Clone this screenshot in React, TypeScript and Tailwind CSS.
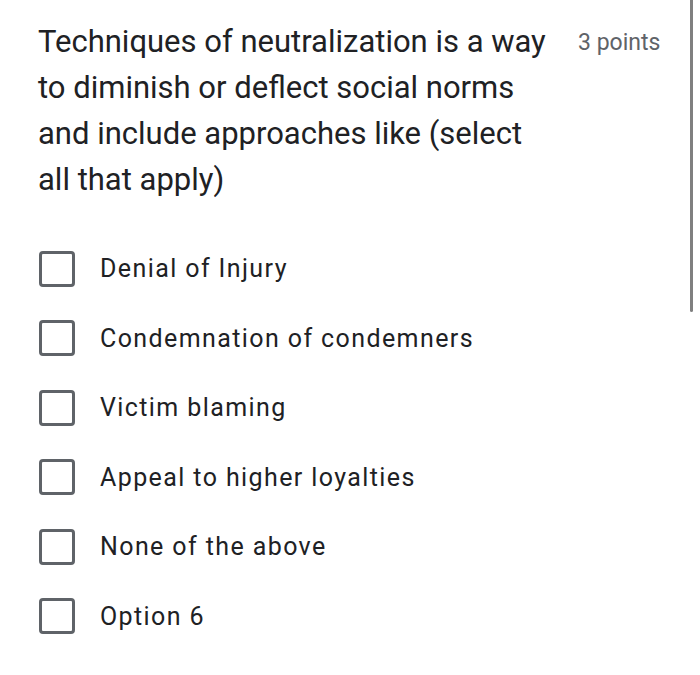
const OPTIONS = [
  'Denial of Injury',
  'Condemnation of condemners',
  'Victim blaming',
  'Appeal to higher loyalties',
  'None of the above',
  'Option 6',
]

export default function App() {
  return (
    <div className="relative w-[700px] h-[675px] bg-white overflow-hidden" style={{ fontFamily: 'Roboto, "Noto Sans", sans-serif' }}>
      {/* scrollbar */}
      <div className="absolute right-[7px] top-0 w-[3px] h-[312px] bg-[#808080] rounded-b-full" />

      <div className="pl-[38px] pt-[19px]">
        <div className="flex items-start">
          <div className="w-[513px] text-[31px] leading-[46px] text-[#202124]">
            Techniques of neutralization is a way to diminish or deflect social norms and include approaches like (select all that apply)
          </div>
          <div className="ml-[27px] pt-[8px] text-[23px] leading-[32px] text-[#5f6368]">3 points</div>
        </div>

        <div className="mt-[31px] flex flex-col">
          {OPTIONS.map(o => (
            <div key={o} className="flex items-center h-[69.5px]">
              <div className="w-[36px] h-[36px] ml-[1px] border-[3px] border-[#5f6368] rounded-[4px]" />
              <span className="ml-[25px] text-[25px] text-[#202124] tracking-[1.4px]">{o}</span>
            </div>
          ))}
        </div>
      </div>
    </div>
  )
}
